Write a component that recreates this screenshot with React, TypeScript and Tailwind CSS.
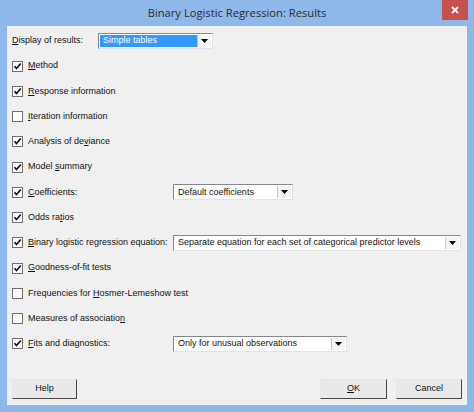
import type { ReactNode } from 'react'

const font = { fontFamily: '"Liberation Sans", Arial, sans-serif' }

function U({ children }: { children: ReactNode }) {
  return <span className="underline underline-offset-[1px]">{children}</span>
}

function Checkbox({ checked }: { checked: boolean }) {
  return (
    <span className="flex h-[11px] w-[11px] flex-shrink-0 items-center justify-center border border-[#707070] bg-white">
      {checked && (
        <svg width="9" height="9" viewBox="0 0 9 9">
          <path d="M1.5 4.2 L3.5 6.5 L7.8 1.5" fill="none" stroke="#111" strokeWidth="1.7" />
        </svg>
      )}
    </span>
  )
}

function Arrow() {
  return (
    <span className="flex h-full w-[14px] items-center justify-center border-l border-[#c8c8c8] bg-[#f4f4f4]">
      <svg width="7" height="4" viewBox="0 0 7 4">
        <path d="M0 0 H7 L3.5 4 Z" fill="#000" />
      </svg>
    </span>
  )
}

function Select({ value, width, selected }: { value: string; width: string; selected?: boolean }) {
  return (
    <div className={`flex h-[16px] items-center border border-[#828790] border-b-[#e3e3e3] border-r-[#e3e3e3] bg-white p-[1px] ${width}`}>
      <span
        className={`flex h-full flex-1 items-center truncate pl-[3px] text-[9px] ${
          selected ? 'bg-[#3399ff] text-white' : 'text-[#111]'
        }`}
      >
        {value}
      </span>
      <Arrow />
    </div>
  )
}

interface Row {
  label: ReactNode
  checked: boolean
  select?: { value: string; width: string }
}

const rows: Row[] = [
  { label: <><U>M</U>ethod</>, checked: true },
  { label: <><U>R</U>esponse information</>, checked: true },
  { label: <><U>I</U>teration information</>, checked: false },
  { label: <>Analysis of de<U>v</U>iance</>, checked: true },
  { label: <>Model <U>s</U>ummary</>, checked: true },
  { label: <><U>C</U>oefficients:</>, checked: true, select: { value: 'Default coefficients', width: 'w-[120px]' } },
  { label: <>Odds ra<U>t</U>ios</>, checked: true },
  {
    label: <><U>B</U>inary logistic regression equation:</>,
    checked: true,
    select: { value: 'Separate equation for each set of categorical predictor levels', width: 'w-[288px]' },
  },
  { label: <><U>G</U>oodness-of-fit tests</>, checked: true },
  { label: <>Frequencies for <U>H</U>osmer-Lemeshow test</>, checked: false },
  { label: <>Measures of associatio<U>n</U></>, checked: false },
  { label: <><U>F</U>its and diagnostics:</>, checked: true, select: { value: 'Only for unusual observations', width: 'w-[174px]' } },
]

function Button({ children, width }: { children: ReactNode; width: string }) {
  return (
    <button
      className={`flex h-[20px] items-center justify-center border border-[#e6e6e6] border-b-[#444] border-r-[#444] bg-[#e9e9e9] text-[9px] text-[#111] ${width}`}
    >
      {children}
    </button>
  )
}

export default function App() {
  return (
    <div className="flex h-[412px] w-[474px] flex-col bg-[#8fb8ea] px-[7px] pb-[7px]" style={font}>
      <div className="relative flex h-[26px] items-center justify-center">
        <span
          className="text-[11.2px] text-[#2b2b2b]"
          style={{ fontFamily: '"Open Sans", "Noto Sans", sans-serif' }}
        >
          Binary Logistic Regression: Results
        </span>
        <span className="absolute right-[-1px] top-0 flex h-[20px] w-[26px] items-center justify-center bg-[#c7504d]">
          <svg width="8" height="8" viewBox="0 0 8 8">
            <path d="M1 1 L7 7 M7 1 L1 7" stroke="#fff" strokeWidth="1.8" />
          </svg>
        </span>
      </div>
      <div className="flex flex-1 flex-col bg-[#f0f0f0] pl-[5px] pr-[5px] text-[9px] text-[#111]">
        <div className="mt-[7px] flex h-[16px] items-center">
          <span className="w-[86px]">
            <U>D</U>isplay of results:
          </span>
          <Select value="Simple tables" width="w-[115px]" selected />
        </div>
        <div className="mt-[4.4px] flex flex-col">
          {rows.map((row, i) => (
            <div key={i} className="flex h-[25.27px] items-center">
              <div className="flex w-[161px] items-center gap-[5px]">
                <Checkbox checked={row.checked} />
                <span className="whitespace-nowrap">{row.label}</span>
              </div>
              {row.select && <Select value={row.select.value} width={row.select.width} />}
            </div>
          ))}
        </div>
        <div className="mt-[22px] flex items-center">
          <Button width="w-[65px]">Help</Button>
          <div className="flex-1" />
          <Button width="w-[67px]">
            <U>O</U>K
          </Button>
          <div className="w-[9px]" />
          <Button width="w-[66px]">Cancel</Button>
        </div>
      </div>
    </div>
  )
}
